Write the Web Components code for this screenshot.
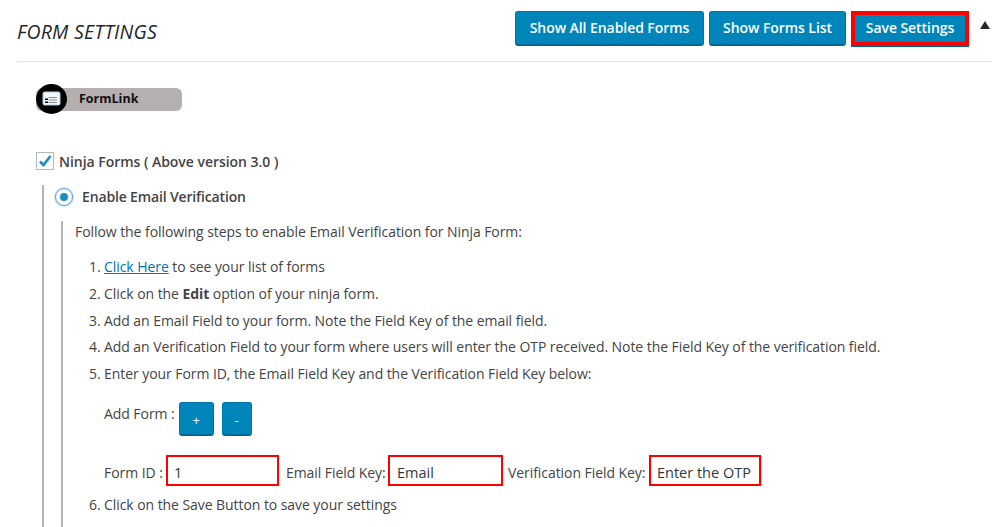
<!DOCTYPE html>
<html lang="en">
  <head>
    <meta charset="UTF-8">
    <title>Form Settings</title>
    <style>
      html, body { margin: 0; padding: 0; background: #fff; height: 527px; overflow: hidden; }
      body { font-family: "Open Sans", "Noto Sans", sans-serif; font-size: 14px; color: #444; letter-spacing: -0.065px; }
      .row { display: flex; padding-left: 29px; align-items: flex-start; }
    </style>
  </head>
  <body>
    <script>
      class WpButton extends HTMLElement {
        constructor() {
          super();
          this.attachShadow({ mode: 'open' });
          this.shadowRoot.innerHTML = `
          <style>
            :host { display: inline-flex; align-items: center; justify-content: center; box-sizing: border-box; flex: none;
              height: 35px; background: #0085ba; color: #fff; border: 1px solid #0073aa; border-bottom: 2px solid #006799;
              border-radius: 3px; font-size: 14px; font-weight: 600; white-space: nowrap; padding-bottom: 1px; }
            :host([small]) { font-weight: 400; height: 34px; font-size: 13px; padding: 2px 0 0; }
            :host([outlined]) { border: 4px solid #f00; border-radius: 0; box-shadow: 0 1px 0 #006799; padding-bottom: 2px; }
          </style>
          <slot></slot>`;
        }
      }
      customElements.define('wp-button', WpButton);

      class PageHeader extends HTMLElement {
        constructor() {
          super();
          this.attachShadow({ mode: 'open' });
          this.shadowRoot.innerHTML = `
          <style>
            :host { display: flex; align-items: flex-start; justify-content: space-between; box-sizing: border-box;
              height: 62px; margin-left: 17px; width: 975px; border-bottom: 1px solid #e2e2e2; }
            h1 { margin: 19px 0 0; font-size: 19.5px; line-height: 26px; font-weight: 400; font-style: italic; color: #23282d; letter-spacing: .2px; }
            .actions { display: flex; gap: 5px; margin-top: 11px; align-items: flex-start; }
            .arrow { width: 0; height: 0; border-left: 5.500px solid transparent; border-right: 5.500px solid transparent;
              border-bottom: 8px solid #23282d; margin: 10px 2px 0 6px; }
          </style>
          <h1><slot name="title"></slot></h1>
          <div class="actions"><slot></slot><span class="arrow"></span></div>`;
        }
      }
      customElements.define('page-header', PageHeader);

      class FormlinkBadge extends HTMLElement {
        constructor() {
          super();
          this.attachShadow({ mode: 'open' });
          this.shadowRoot.innerHTML = `
          <style>
            :host { display: block; width: 146px; height: 30px; margin: 22px 0 0 36px; position: relative; }
            .pill { position: absolute; left: 0; right: 0; top: 4px; height: 23px; background: #b5afaf; border-radius: 6px;
              box-sizing: border-box; padding-left: 43px; font-size: 12.500px; line-height: 21px; font-weight: 700; color: #111; letter-spacing: 0; }
            svg { position: absolute; left: 0; top: 0; }
          </style>
          <div class="pill"><slot></slot></div>
          <svg width="31" height="30" viewBox="0 0 31 30">
            <ellipse cx="15.500" cy="15" rx="15.500" ry="15" fill="#000"/>
            <rect x="7" y="8" width="17" height="13" rx="1.500" fill="#f4f8fb" stroke="#a9cfe6" stroke-width="1"/>
            <rect x="9" y="14.500" width="3" height="1.500" fill="#000"/>
            <rect x="9" y="17.500" width="3" height="1.500" fill="#000"/>
            <path d="M12.500 13.500h8.500M12.500 16h8.500M12.500 18.500h8.500" stroke="#8a8a8a" stroke-width="1"/>
          </svg>`;
        }
      }
      customElements.define('formlink-badge', FormlinkBadge);

      class CheckRow extends HTMLElement {
        constructor() {
          super();
          this.attachShadow({ mode: 'open' });
          this.shadowRoot.innerHTML = `
          <style>
            :host { display: flex; align-items: center; gap: 5px; height: 20px; margin: 37px 0 0 36px; font-weight: 600; color: #444; letter-spacing: -0.03px; }
            .box { width: 16px; height: 16px; border: 1px solid #b4b9be; background: #fff; display: block; flex: none; }
          </style>
          <span class="box">
            <svg width="16" height="16" viewBox="0 0 16 16"><path d="M3 8.500l3.500 3.500L13.500 3" fill="none" stroke="#1e8cbe" stroke-width="2.600"/></svg>
          </span>
          <slot></slot>`;
        }
      }
      customElements.define('check-row', CheckRow);

      class RadioRow extends HTMLElement {
        constructor() {
          super();
          this.attachShadow({ mode: 'open' });
          this.shadowRoot.innerHTML = `
          <style>
            :host { display: flex; align-items: center; gap: 9px; height: 20px; font-weight: 600; padding-left: 11px; color: #444; letter-spacing: -0.15px; }
            .dot { width: 18px; height: 18px; border-radius: 50%; border: 1px solid #5b9dd9; box-shadow: 0 0 2px rgba(30,140,190,.8);
              box-sizing: border-box; display: flex; align-items: center; justify-content: center; flex: none; margin-top: 2px; }
            .dot::after { content: ""; width: 8px; height: 8px; border-radius: 50%; background: #1e8cbe; }
          </style>
          <span class="dot"></span><slot></slot>`;
        }
      }
      customElements.define('radio-row', RadioRow);

      class StepItem extends HTMLElement {
        constructor() {
          super();
          this.attachShadow({ mode: 'open' });
          this.shadowRoot.innerHTML = `
          <style>
            :host { display: flex; line-height: 20px; margin-bottom: 6.750px; white-space: nowrap; }
            .n { width: 29px; box-sizing: border-box; padding-left: 14px; flex: none; }
          </style>
          <span class="n"></span><div><slot></slot></div>`;
        }
        connectedCallback() {
          this.shadowRoot.querySelector('.n').textContent = this.getAttribute('n') + '.';
        }
      }
      customElements.define('step-item', StepItem);

      class KeyField extends HTMLElement {
        constructor() {
          super();
          this.attachShadow({ mode: 'open' });
          this.shadowRoot.innerHTML = `
          <style>
            :host { display: inline-flex; align-items: center; flex: none; }
            .label { display: block; flex: none; padding-top: 3px; }
            .input { box-sizing: border-box; height: 31px; border: 2px solid #f00; padding: 3px var(--pad, 6px) 0; display: flex; align-items: center; color: #32373c; font-size: 14.500px; letter-spacing: 0; }
          </style>
          <span class="label"><slot name="label"></slot></span><span class="input"><slot></slot></span>`;
        }
        connectedCallback() {
          this.shadowRoot.querySelector('.label').style.width = this.getAttribute('lw') + 'px';
          this.shadowRoot.querySelector('.input').style.width = this.getAttribute('w') + 'px';
        }
      }
      customElements.define('key-field', KeyField);

      class RuledBlock extends HTMLElement {
        constructor() {
          super();
          this.attachShadow({ mode: 'open' });
          this.shadowRoot.innerHTML = `
          <style>
            :host { display: block; border-left: 2px solid #b4b4b4; }
          </style>
          <slot></slot>`;
        }
      }
      customElements.define('ruled-block', RuledBlock);
    </script>

    <page-header>
      <span slot="title">FORM SETTINGS</span>
      <wp-button style="width:189px">Show All Enabled Forms</wp-button>
      <wp-button style="width:137px">Show Forms List</wp-button>
      <wp-button outlined style="width:118px">Save Settings</wp-button>
    </page-header>

    <formlink-badge>FormLink</formlink-badge>
    <check-row>Ninja Forms ( Above version 3.0 )</check-row>

    <ruled-block style="margin:14px 0 0 42px; height:342px; padding-top:1px; box-sizing:border-box">
      <radio-row>Enable Email Verification</radio-row>
      <ruled-block style="margin:15px 0 0 17px; padding-left:12px; height:306px; box-sizing:border-box">
        <div style="line-height:20px; padding-top:1px">Follow the following steps to enable Email Verification for Ninja Form:</div>
        <div style="height:15px"></div>
        <step-item n="1"><a href="#" style="color:#0073aa">Click Here</a> to see your list of forms</step-item>
        <step-item n="2">Click on the <b>Edit</b> option of your ninja form.</step-item>
        <step-item n="3">Add an Email Field to your form. Note the Field Key of the email field.</step-item>
        <step-item n="4">Add an Verification Field to your form where users will enter the OTP received. Note the Field Key of the verification field.</step-item>
        <step-item n="5">Enter your Form ID, the Email Field Key and the Verification Field Key below:</step-item>
        <div class="row" style="gap:8px; margin-top:18px">
          <span style="line-height:20px; margin-top:2px; margin-right:-4px">Add Form :</span>
          <wp-button small style="width:35px">+</wp-button>
          <wp-button small style="width:30px">-</wp-button>
        </div>
        <div class="row" style="margin-top:19px; align-items:center">
          <key-field lw="62" w="113"><span slot="label">Form ID :</span>1</key-field>
          <key-field lw="102" w="115" style="margin-left:7px; --pad:7px"><span slot="label">Email Field Key:</span>Email</key-field>
          <key-field lw="141" w="112" style="margin-left:5px; box-shadow:1px 0 0 #ddd"><span slot="label">Verification Field Key:</span>Enter the OTP</key-field>
        </div>
        <div style="height:9px"></div>
        <step-item n="6">Click on the Save Button to save your settings</step-item>
      </ruled-block>
    </ruled-block>
  </body>
</html>
